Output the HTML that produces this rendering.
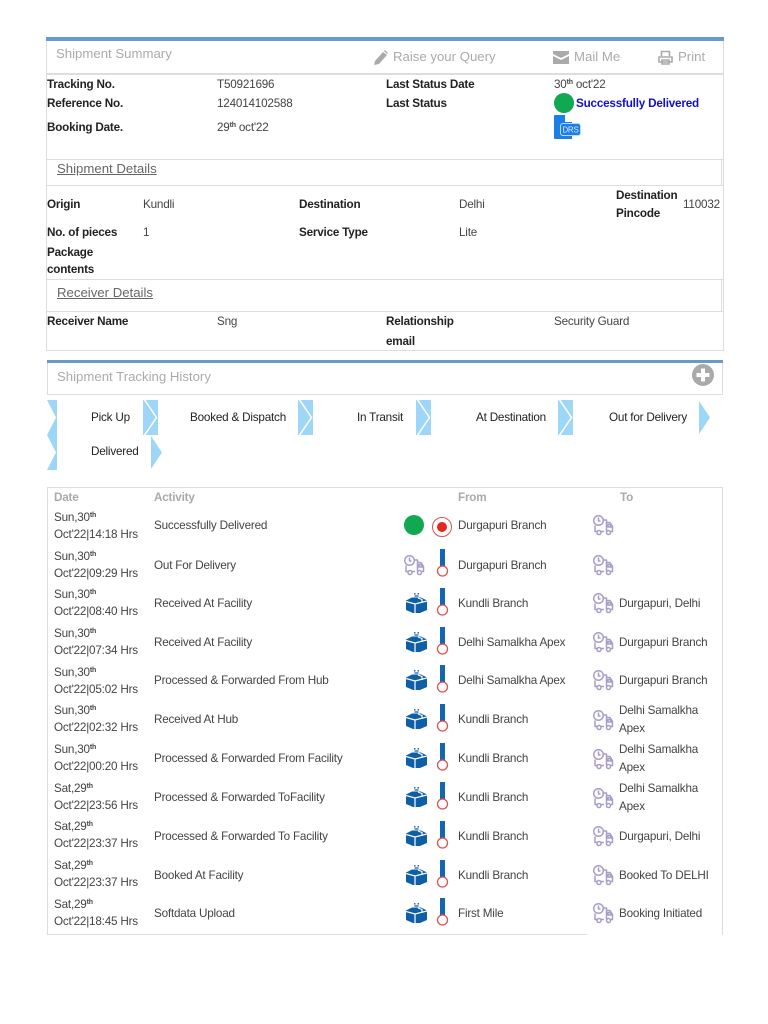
<!DOCTYPE html>
<html><head><meta charset="utf-8"><title>Shipment Summary</title>
<style>
html,body{margin:0;padding:0;background:#fff}
#p{position:relative;width:768px;height:1024px;overflow:hidden;font-family:"Liberation Sans",sans-serif;font-size:11.7px;letter-spacing:-.2px;line-height:16px;color:#444;filter:blur(.25px)}
#p span,#p svg,#p i{position:absolute;white-space:nowrap;display:block}
b{font-weight:700;color:#222;position:absolute;white-space:nowrap}
.h{font-size:13.2px;color:#aaa;line-height:16px;letter-spacing:0}
.u{font-size:13.2px;color:#666;text-decoration:underline;line-height:16px;letter-spacing:0}
.l{background:#ddd}
.bl{background:#6699cc}
.d{left:54px}.a{left:154px}.f{left:458px}.t{left:619px}
sup{font-size:7px;font-weight:700;line-height:0;vertical-align:4px}
.k{color:#222}
.gh{font-weight:700;color:#aaa}
.ic{left:406px;width:21px;height:20px;margin-top:-1px}
.th{left:436px;width:14px;height:30px}
.tr{width:21px;height:21px}
</style></head><body>
<svg width="0" height="0" style="position:absolute">
<defs>
<symbol id="truck" viewBox="0 0 21 21"><g fill="none" stroke="#a79dc8" stroke-width="1.500" stroke-linejoin="round"><circle cx="5.500" cy="5.500" r="4.800"/><path d="M5.500 2.500v3.500h2M2 10.500v6h2M8 16.500h3M10.500 5h3v11.500M13.500 7.500h3.500l2.500 4v5h-1.500M15 9.500h2l1.500 2.500H15z"/><circle cx="6" cy="17.500" r="2"/><circle cx="15.500" cy="17.500" r="2"/></g></symbol>
<symbol id="box" viewBox="0 0 21 20"><path fill="#0f5fa8" d="M0 7.500L6 4.500H15L21 7.500V17L14 20H7L0 17z"/><path fill="none" stroke="#fff" stroke-width="1.200" d="M0 8.500L9 11L21 8M9 11V20M12 5L16 6.500V10"/><path stroke="#0f5fa8" stroke-width="1.300" d="M8 .8h1.500M11.500 .8h1.500M8.500 3h4"/></symbol>
<symbol id="therm" viewBox="0 0 14 30"><rect x="4" y="0" width="5" height="18" fill="#1565b5"/><circle cx="6.500" cy="22" r="5" fill="#fff" stroke="#d9534f" stroke-width="1.300"/></symbol>
<symbol id="arrow" viewBox="0 0 15 35"><rect width="15" height="35" fill="#9ed6f7"/><path fill="none" stroke="#fff" stroke-width="1.500" d="M1 -1L13.500 17.500L1 36"/></symbol>
</defs></svg>
<div id="p">

<i class="bl" style="left:46px;top:37px;width:678px;height:4px"></i>
<i class="l" style="left:46px;top:41px;width:1px;height:310px"></i>
<i class="l" style="left:723px;top:41px;width:1px;height:310px"></i>
<i class="l" style="left:46px;top:73px;width:678px;height:2px"></i>
<span class="h" style="left:56px;top:46px">Shipment Summary</span>
<svg style="left:374px;top:50px" width="14" height="15" viewBox="0 0 14 15"><path fill="#aaa" d="M0 15l1-4 8-9 4 3-8 9zM10 1l1-1 3 3-1 1z"/></svg>
<span class="h" style="left:393px;top:49px">Raise your Query</span>
<svg style="left:553px;top:51px" width="16" height="13" viewBox="0 0 16 13"><path fill="#aaa" d="M0 0h16v3L8 7 0 3zM0 5l8 4 8-4v8H0z"/></svg>
<span class="h" style="left:574px;top:49px">Mail Me</span>
<svg style="left:658px;top:50px" width="15" height="15" viewBox="0 0 15 15"><path fill="none" stroke="#aaa" stroke-width="1.600" d="M3.500 6V1.500h8V6M1 7h13v5H1zM4 10h7v4H4z"/></svg>
<span class="h" style="left:678px;top:49px">Print</span>

<b style="left:47px;top:77px">Tracking No.</b>
<span style="left:217px;top:77px">T50921696</span>
<b style="left:386px;top:77px">Last Status Date</b>
<span style="left:554px;top:77px">30<sup>th</sup> oct'22</span>
<b style="left:47px;top:96px">Reference No.</b>
<span style="left:217px;top:96px">124014102588</span>
<b style="left:386px;top:96px">Last Status</b>
<i style="left:554px;top:93px;width:20px;height:20px;border-radius:50%;background:#10a850"></i>
<b style="left:576px;top:96px;color:#1010cc">Successfully Delivered</b>
<b style="left:47px;top:120px">Booking Date.</b>
<span style="left:217px;top:120px">29<sup>th</sup> oct'22</span>
<svg style="left:554px;top:114px" width="28" height="26" viewBox="0 0 28 26"><path fill="#1c7fe8" d="M0 2a1 1 0 011-1h10l7 7v17H1a1 1 0 01-1-1z"/><path fill="#fff" d="M11 1l7 7h-7z"/><rect x="6.500" y="9.500" width="20" height="12" rx="2.500" fill="#1c7fe8" stroke="#bcdcfb" stroke-width="1"/><text x="16.500" y="18.500" font-size="8" fill="#dcecff" text-anchor="middle" font-family="Liberation Sans">DRS</text></svg>

<i class="l" style="left:47px;top:159px;width:676px;height:1px"></i>
<i class="l" style="left:47px;top:185px;width:676px;height:1px"></i>
<i class="l" style="left:721px;top:159px;width:1px;height:27px"></i>
<span class="u" style="left:57px;top:161px">Shipment Details</span>

<b style="left:47px;top:197px">Origin</b>
<span style="left:143px;top:197px">Kundli</span>
<b style="left:299px;top:197px">Destination</b>
<span style="left:459px;top:197px">Delhi</span>
<b style="left:616px;top:188px">Destination</b>
<b style="left:616px;top:206px">Pincode</b>
<span style="left:683px;top:197px">110032</span>
<b style="left:47px;top:225px">No. of pieces</b>
<span style="left:143px;top:225px">1</span>
<b style="left:299px;top:225px">Service Type</b>
<span style="left:459px;top:225px">Lite</span>
<b style="left:47px;top:245px">Package</b>
<b style="left:47px;top:262px">contents</b>

<i class="l" style="left:47px;top:279px;width:676px;height:1px"></i>
<i class="l" style="left:47px;top:311px;width:676px;height:1px"></i>
<i class="l" style="left:721px;top:279px;width:1px;height:33px"></i>
<span class="u" style="left:57px;top:285px">Receiver Details</span>

<b style="left:47px;top:314px">Receiver Name</b>
<span style="left:217px;top:314px">Sng</span>
<b style="left:386px;top:314px">Relationship</b>
<span style="left:554px;top:314px">Security Guard</span>
<b style="left:386px;top:334px">email</b>
<i class="l" style="left:46px;top:350px;width:678px;height:1px"></i>

<i class="bl" style="left:47px;top:360px;width:676px;height:3px"></i>
<i class="l" style="left:47px;top:363px;width:1px;height:32px"></i>
<i class="l" style="left:722px;top:363px;width:1px;height:32px"></i>
<i class="l" style="left:47px;top:394px;width:676px;height:1px"></i>
<span class="h" style="left:57px;top:369px">Shipment Tracking History</span>
<svg style="left:692px;top:364px" width="22" height="22" viewBox="0 0 22 22"><circle cx="11" cy="11" r="11" fill="#aaa"/><path stroke="#fff" stroke-width="4" d="M11 4.500v13M4.500 11h13"/></svg>

<svg style="left:47px;top:400px" width="10" height="35" viewBox="0 0 10 35"><path fill="#9ed6f7" d="M0 0h10v35H0l9-17.500z"/></svg>
<span class="k" style="left:91px;top:410px">Pick Up</span>
<svg style="left:143px;top:400px" width="15" height="35"><use href="#arrow"/></svg>
<span class="k" style="left:190px;top:410px">Booked &amp; Dispatch</span>
<svg style="left:298px;top:400px" width="15" height="35"><use href="#arrow"/></svg>
<span class="k" style="left:357px;top:410px">In Transit</span>
<svg style="left:416px;top:400px" width="15" height="35"><use href="#arrow"/></svg>
<span class="k" style="left:476px;top:410px">At Destination</span>
<svg style="left:558px;top:400px" width="15" height="35"><use href="#arrow"/></svg>
<span class="k" style="left:609px;top:410px">Out for Delivery</span>
<svg style="left:699px;top:401px" width="11" height="33" viewBox="0 0 11 33"><path fill="#9ed6f7" d="M0 0l11 16.500L0 33z"/></svg>
<svg style="left:47px;top:435px" width="10" height="35" viewBox="0 0 10 35"><path fill="#9ed6f7" d="M0 0h10v35H0l9-17.500z"/></svg>
<span class="k" style="left:91px;top:444px">Delivered</span>
<svg style="left:151px;top:436px" width="11" height="33" viewBox="0 0 11 33"><path fill="#9ed6f7" d="M0 0l11 16.500L0 33z"/></svg>

<i class="l" style="left:47px;top:487px;width:675px;height:1px"></i>
<i class="l" style="left:47px;top:487px;width:1px;height:448px"></i>
<i class="l" style="left:722px;top:487px;width:1px;height:448px"></i>
<i class="l" style="left:47px;top:934px;width:540px;height:1px"></i>
<span class="gh d" style="top:490px">Date</span>
<span class="gh a" style="top:490px">Activity</span>
<span class="gh f" style="top:490px">From</span>
<span class="gh" style="left:620px;top:490px">To</span>

<span class="d" style="top:510px">Sun,30<sup>th</sup></span><span class="d" style="top:527px">Oct'22|14:18 Hrs</span>
<span class="a" style="top:518px">Successfully Delivered</span>
<i style="left:404px;top:515px;width:20px;height:20px;border-radius:50%;background:#10a850"></i>
<i style="left:432px;top:517px;width:20px;height:20px;border-radius:50%;border:1px solid #d9534f;box-sizing:border-box;background:#fff"></i>
<i style="left:437px;top:522px;width:10px;height:10px;border-radius:50%;background:#e5281f"></i>
<span class="f" style="top:518px">Durgapuri Branch</span>
<svg class="tr" style="left:593px;top:515px"><use href="#truck"/></svg>

<span class="d" style="top:549px">Sun,30<sup>th</sup></span><span class="d" style="top:566px">Oct'22|09:29 Hrs</span>
<span class="a" style="top:558px">Out For Delivery</span>
<svg class="tr" style="left:404px;top:555px"><use href="#truck"/></svg>
<svg class="th" style="left:436px;top:549px"><use href="#therm"/></svg>
<span class="f" style="top:558px">Durgapuri Branch</span>
<svg class="tr" style="left:593px;top:555px"><use href="#truck"/></svg>

<span class="d" style="top:587px">Sun,30<sup>th</sup></span><span class="d" style="top:604px">Oct'22|08:40 Hrs</span>
<span class="a" style="top:596px">Received At Facility</span>
<svg class="ic" style="top:594px"><use href="#box"/></svg>
<svg class="th" style="top:588px"><use href="#therm"/></svg>
<span class="f" style="top:596px">Kundli Branch</span>
<svg class="tr" style="left:593px;top:593px"><use href="#truck"/></svg>
<span class="t" style="top:596px">Durgapuri, Delhi</span>

<span class="d" style="top:626px">Sun,30<sup>th</sup></span><span class="d" style="top:643px">Oct'22|07:34 Hrs</span>
<span class="a" style="top:635px">Received At Facility</span>
<svg class="ic" style="top:633px"><use href="#box"/></svg>
<svg class="th" style="top:627px"><use href="#therm"/></svg>
<span class="f" style="top:635px">Delhi Samalkha Apex</span>
<svg class="tr" style="left:593px;top:632px"><use href="#truck"/></svg>
<span class="t" style="top:635px">Durgapuri Branch</span>

<span class="d" style="top:665px">Sun,30<sup>th</sup></span><span class="d" style="top:682px">Oct'22|05:02 Hrs</span>
<span class="a" style="top:673px">Processed &amp; Forwarded From Hub</span>
<svg class="ic" style="top:671px"><use href="#box"/></svg>
<svg class="th" style="top:665px"><use href="#therm"/></svg>
<span class="f" style="top:673px">Delhi Samalkha Apex</span>
<svg class="tr" style="left:593px;top:670px"><use href="#truck"/></svg>
<span class="t" style="top:673px">Durgapuri Branch</span>

<span class="d" style="top:703px">Sun,30<sup>th</sup></span><span class="d" style="top:720px">Oct'22|02:32 Hrs</span>
<span class="a" style="top:712px">Received At Hub</span>
<svg class="ic" style="top:710px"><use href="#box"/></svg>
<svg class="th" style="top:704px"><use href="#therm"/></svg>
<span class="f" style="top:712px">Kundli Branch</span>
<svg class="tr" style="left:593px;top:710px"><use href="#truck"/></svg>
<span class="t" style="top:703px">Delhi Samalkha</span><span class="t" style="top:721px">Apex</span>

<span class="d" style="top:742px">Sun,30<sup>th</sup></span><span class="d" style="top:759px">Oct'22|00:20 Hrs</span>
<span class="a" style="top:751px">Processed &amp; Forwarded From Facility</span>
<svg class="ic" style="top:749px"><use href="#box"/></svg>
<svg class="th" style="top:743px"><use href="#therm"/></svg>
<span class="f" style="top:751px">Kundli Branch</span>
<svg class="tr" style="left:593px;top:749px"><use href="#truck"/></svg>
<span class="t" style="top:742px">Delhi Samalkha</span><span class="t" style="top:760px">Apex</span>

<span class="d" style="top:781px">Sat,29<sup>th</sup></span><span class="d" style="top:798px">Oct'22|23:56 Hrs</span>
<span class="a" style="top:790px">Processed &amp; Forwarded ToFacility</span>
<svg class="ic" style="top:788px"><use href="#box"/></svg>
<svg class="th" style="top:782px"><use href="#therm"/></svg>
<span class="f" style="top:790px">Kundli Branch</span>
<svg class="tr" style="left:593px;top:788px"><use href="#truck"/></svg>
<span class="t" style="top:781px">Delhi Samalkha</span><span class="t" style="top:799px">Apex</span>

<span class="d" style="top:819px">Sat,29<sup>th</sup></span><span class="d" style="top:836px">Oct'22|23:37 Hrs</span>
<span class="a" style="top:829px">Processed &amp; Forwarded To Facility</span>
<svg class="ic" style="top:827px"><use href="#box"/></svg>
<svg class="th" style="top:821px"><use href="#therm"/></svg>
<span class="f" style="top:829px">Kundli Branch</span>
<svg class="tr" style="left:593px;top:826px"><use href="#truck"/></svg>
<span class="t" style="top:829px">Durgapuri, Delhi</span>

<span class="d" style="top:858px">Sat,29<sup>th</sup></span><span class="d" style="top:875px">Oct'22|23:37 Hrs</span>
<span class="a" style="top:868px">Booked At Facility</span>
<svg class="ic" style="top:866px"><use href="#box"/></svg>
<svg class="th" style="top:860px"><use href="#therm"/></svg>
<span class="f" style="top:868px">Kundli Branch</span>
<svg class="tr" style="left:593px;top:865px"><use href="#truck"/></svg>
<span class="t" style="top:868px">Booked To DELHI</span>

<span class="d" style="top:897px">Sat,29<sup>th</sup></span><span class="d" style="top:914px">Oct'22|18:45 Hrs</span>
<span class="a" style="top:906px">Softdata Upload</span>
<svg class="ic" style="top:904px"><use href="#box"/></svg>
<svg class="th" style="top:898px"><use href="#therm"/></svg>
<span class="f" style="top:906px">First Mile</span>
<svg class="tr" style="left:593px;top:903px"><use href="#truck"/></svg>
<span class="t" style="top:906px">Booking Initiated</span>

</div></body></html>
